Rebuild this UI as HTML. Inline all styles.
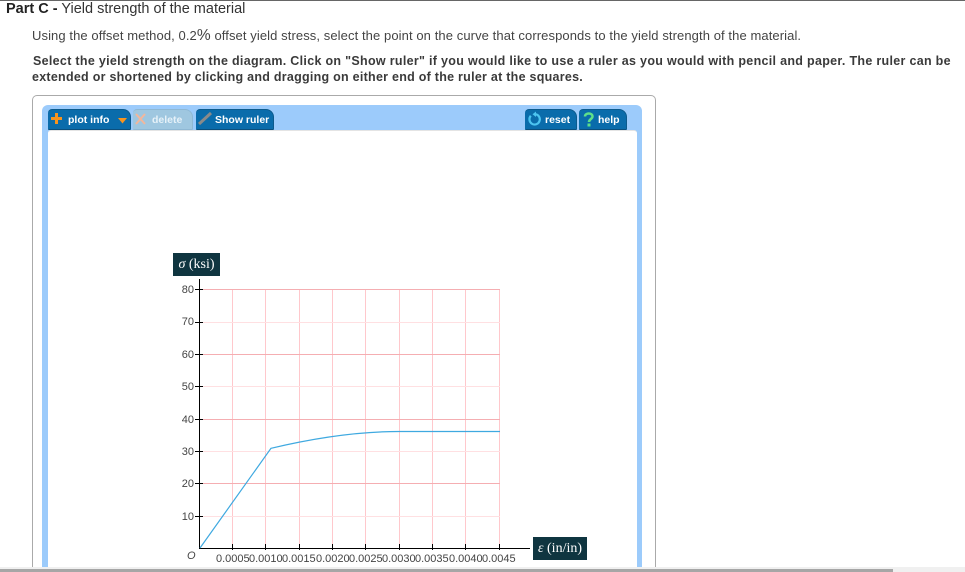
<!DOCTYPE html>
<html><head><meta charset="utf-8">
<style>
html,body{margin:0;padding:0;background:#fff;overflow:hidden;width:965px;height:572px}
#w{width:965px;height:572px;position:relative;overflow:hidden;font-family:"Liberation Sans",Arial,sans-serif;color:#333}
.a{position:absolute;white-space:nowrap}
.btn{position:absolute;top:109px;height:19px;background:#0a6cab;border-radius:4px 8px 1px 1px;border-bottom:1px solid #0b4f7d;border-top:1px solid #0c5a8c;border-right:1px solid #0c5a8c;color:#fff;font-weight:bold;font-size:10.5px;line-height:20px;box-sizing:content-box;white-space:nowrap}
.btn span{position:absolute;top:0}
.btn svg{position:absolute;left:0;top:1px}
.lab{position:absolute;background:#0f3540;color:#fff;font-family:"Liberation Serif",serif;font-size:14px;text-align:center}
.t{position:absolute;font-size:11px;color:#444;line-height:12px}
</style></head><body><div id="w">
<div class="a" style="left:0;top:0;width:965px;height:1px;background:#666"></div>
<div class="a" style="left:6px;top:1px;font-size:14.5px;line-height:16px"><b style="color:#222">Part C -</b> Yield strength of the material</div>
<div class="a" style="left:32px;top:28px;font-size:13px;line-height:16px;color:#444;letter-spacing:.09px">Using the offset method, 0.2<span style="font-size:15.500px">%</span> offset yield stress, select the point on the curve that corresponds to the yield strength of the material.</div>
<div class="a" style="left:33px;top:53px;font-size:12.5px;line-height:16px;font-weight:bold;color:#3a3a3a;letter-spacing:.305px">Select the yield strength on the diagram. Click on "Show ruler" if you would like to use a ruler as you would with pencil and paper. The ruler can be</div>
<div class="a" style="left:32px;top:69px;font-size:12.5px;line-height:16px;font-weight:bold;color:#3a3a3a;letter-spacing:.26px">extended or shortened by clicking and dragging on either end of the ruler at the squares.</div>

<div class="a" style="left:32px;top:95px;width:624px;height:472px;border:1px solid #aaa;border-bottom:0;border-radius:5px 5px 0 0;box-sizing:border-box"></div>
<div class="a" style="left:42px;top:105px;width:600px;height:462px;background:#9ccbfb;border-radius:6px 6px 0 0"></div>
<div class="a" style="left:48px;top:130px;width:589px;height:437px;background:#fff;border-radius:3px 3px 0 0;border-top:1px solid #e4e4e4;box-sizing:border-box"></div>

<div class="btn" style="left:48px;width:82px">
<svg width="20" height="19"><path d="M3 7.500H14M8.500 2V13" stroke="#f7941e" stroke-width="3" fill="none"/></svg>
<span style="left:20px">plot info</span>
<svg style="left:69px" width="12" height="19"><path d="M1 7H10L5.500 12.500Z" fill="#f7941e"/></svg></div>
<div class="btn" style="left:133px;width:59px;background:#9fc7e0;border-color:#8fb8d4">
<svg width="20" height="19"><path d="M3 3L12 13M12 3L3 13" stroke="#f3b79c" stroke-width="2" fill="none"/></svg>
<span style="left:19px;color:#e6f1f8">delete</span></div>
<div class="btn" style="left:196px;width:77px">
<svg width="20" height="19"><path d="M3 13L15 2" stroke="#8a8a8a" stroke-width="3" fill="none"/></svg>
<span style="left:19px">Show ruler</span></div>
<div class="btn" style="left:525px;width:51px">
<svg width="20" height="19"><path d="M5.800 4.800A5.200 5.200 0 1 0 10.500 3.200" stroke="#4cc4f0" stroke-width="2.200" fill="none"/><path d="M11 .5V6L7.500 3.200Z" fill="#4cc4f0"/></svg>
<span style="left:20px">reset</span></div>
<div class="btn" style="left:579px;width:47px">
<svg width="20" height="19"><path d="M6 5.500C6 1.500 13.500 1.500 13.500 5.500C13.500 8 10 8 10 11" stroke="#5fe08a" stroke-width="2.500" fill="none"/><rect x="8.500" y="12.500" width="3" height="3" fill="#5fe08a"/></svg>
<span style="left:19px">help</span></div>

<div class="lab" style="left:173px;top:253px;width:47px;height:23px;line-height:24px;font-size:14px"><i>σ</i> (ksi)</div>
<div class="lab" style="left:533px;top:537px;width:54px;height:23px;line-height:24px"><i>ε</i> (in/in)</div>

<svg class="a" style="left:0;top:0" width="965" height="572">
<g stroke="#ffc8cc" stroke-width="1" shape-rendering="crispEdges">
<path d="M232.500 289V548M265.500 289V548M299.500 289V548M332.500 289V548M365.500 289V548M399.500 289V548M432.500 289V548M465.500 289V548M499.500 289V548"/>
</g>
<g stroke-width="1" shape-rendering="crispEdges" fill="none">
<path d="M200 289.500H500M200 354.500H500M200 419.500H500M200 483.500H500" stroke="#f5aeb2"/>
<path d="M200 322.500H500M200 386.500H500M200 451.500H500M200 516.500H500" stroke="#ffe0e2"/>
<path d="M199.500 279V548.500M199 548.500H530" stroke="#000"/>
<path d="M195 289.500H203M195 322.500H203M195 354.500H203M195 386.500H203M195 419.500H203M195 451.500H203M195 483.500H203M195 516.500H203" stroke="#000"/>
<path d="M232.500 544V550M265.500 544V550M299.500 544V550M332.500 544V550M365.500 544V550M399.500 544V550M432.500 544V550M465.500 544V550M499.500 544V550" stroke="#000"/>
</g>
<path d="M200 548L271 448.300C310 439 355 431.500 399 431.500H500" stroke="#3fa9e0" stroke-width="1.200" fill="none"/>
</svg>

<div class="t" style="left:170px;top:284px;width:24px;text-align:right">80</div>
<div class="t" style="left:170px;top:316px;width:24px;text-align:right">70</div>
<div class="t" style="left:170px;top:349px;width:24px;text-align:right">60</div>
<div class="t" style="left:170px;top:381px;width:24px;text-align:right">50</div>
<div class="t" style="left:170px;top:414px;width:24px;text-align:right">40</div>
<div class="t" style="left:170px;top:446px;width:24px;text-align:right">30</div>
<div class="t" style="left:170px;top:478px;width:24px;text-align:right">20</div>
<div class="t" style="left:170px;top:511px;width:24px;text-align:right">10</div>
<div class="t" style="left:187px;top:550px;font-style:italic">O</div>
<div class="t" style="left:216px;top:553px">0.0005</div>
<div class="t" style="left:249px;top:553px">0.0010</div>
<div class="t" style="left:282px;top:553px">0.0015</div>
<div class="t" style="left:316px;top:553px">0.0020</div>
<div class="t" style="left:349px;top:553px">0.0025</div>
<div class="t" style="left:382px;top:553px">0.0030</div>
<div class="t" style="left:415px;top:553px">0.0035</div>
<div class="t" style="left:449px;top:553px">0.0040</div>
<div class="t" style="left:482px;top:553px">0.0045</div>

<div class="a" style="left:0;top:567px;width:965px;height:5px;background:#f0f0f0"></div>
<div class="a" style="left:0;top:569px;width:893px;height:3px;background:#a6a6a6"></div>
</div></body></html>
